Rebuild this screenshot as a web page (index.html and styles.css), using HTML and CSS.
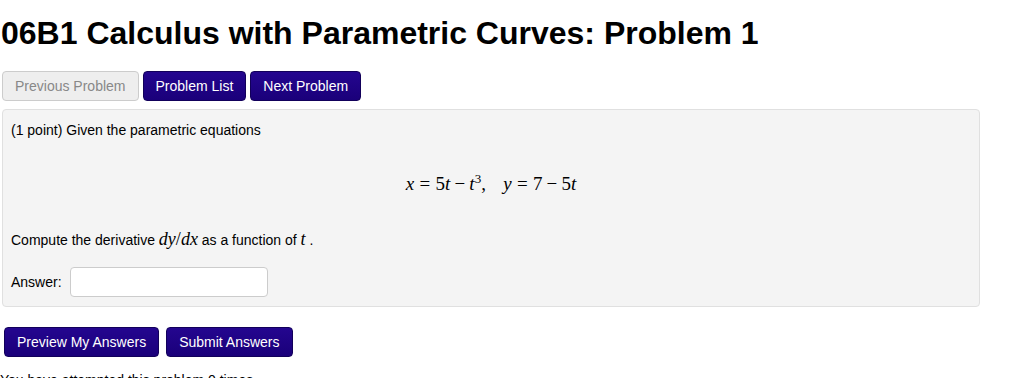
FILE: index.html
```html
<!DOCTYPE html>
<html lang="en">
<head>
    <meta charset="UTF-8">
    <title>06B1 Calculus with Parametric Curves: Problem 1</title>
    <link rel="stylesheet" href="styles.css">
</head>
<body>
    <h1 class="problem-title">06B1 Calculus with Parametric Curves: Problem 1</h1>

    <div class="nav-buttons">
        <span class="btn btn-disabled">Previous Problem</span>
        <a class="btn" href="#">Problem List</a>
        <a class="btn" href="#">Next Problem</a>
    </div>

    <div class="problem-box">
        <p class="problem-text">(1 point) Given the parametric equations</p>
        <div class="equation">
            <span class="math"><i>x</i><span class="rel">=</span>5<i>t</i><span class="bin">&minus;</span><i>t</i><sup>3</sup>,</span>
            <span class="math eq-gap"><i>y</i><span class="rel">=</span>7<span class="bin">&minus;</span>5<i>t</i></span>
        </div>
        <p class="problem-text">Compute the derivative <span class="math inline"><i>dy</i>/<i>dx</i></span> as a function of <span class="math inline"><i>t</i></span> .</p>
        <p class="answer-row">
            <label for="answer">Answer:</label>
            <input type="text" id="answer" class="answer-input">
        </p>
    </div>

    <div class="submit-buttons">
        <button class="btn">Preview My Answers</button>
        <button class="btn">Submit Answers</button>
    </div>

    <p class="attempts">You have attempted this problem 0 times.</p>
</body>
</html>
```

FILE: styles.css
```css
body {
    font-family: "Liberation Sans", Arial, sans-serif;
    font-size: 14px;
    color: #000;
    background-color: #fff;
    margin: 0;
    padding: 0 0 0 2px;
}

.problem-title {
    font-size: 32px;
    font-weight: bold;
    margin: 0;
    padding-top: 14px;
    line-height: 38px;
    margin-left: -1px;
}

.nav-buttons {
    display: flex;
    gap: 4px;
    margin-top: 19px;
}

.btn {
    display: inline-block;
    box-sizing: border-box;
    height: 30px;
    line-height: 28px;
    padding: 0 12px;
    font-family: "Liberation Sans", Arial, sans-serif;
    font-size: 14px;
    color: #fff;
    text-decoration: none;
    background: linear-gradient(#24068f, #1a007a);
    border: 1px solid #12005a;
    border-radius: 4px;
    cursor: pointer;
}

.btn-disabled {
    color: #888;
    background: #eee;
    border-color: #ccc;
    cursor: default;
}

.problem-box {
    margin-top: 8px;
    width: 978px;
    box-sizing: border-box;
    background-color: #f4f4f4;
    border: 1px solid #e0e0e0;
    border-radius: 4px;
    padding: 12px 8px 9px 8px;
}

.problem-text {
    margin: 0;
    line-height: 17px;
}

.equation {
    text-align: center;
    margin: 30px 0 37px 0;
    font-size: 19px;
    line-height: 20px;
}

.math {
    font-family: "Liberation Serif", "Times New Roman", serif;
}

.math sup {
    font-size: 13px;
}

.rel {
    margin: 0 0.28em;
}

.bin {
    margin: 0 0.22em;
}

.eq-gap {
    margin-left: 12px;
}

.inline {
    font-size: 18px;
}

.answer-row {
    display: flex;
    align-items: center;
    gap: 8px;
    margin: 18px 0 0 0;
}

.answer-input {
    width: 198px;
    height: 30px;
    box-sizing: border-box;
    border: 1px solid #ccc;
    border-radius: 4px;
    background-color: #fff;
    margin: 0;
}

.submit-buttons {
    display: flex;
    gap: 7px;
    margin-top: 20px;
    margin-left: 2px;
}

.attempts {
    margin: 15px 0 0 -2px;
}
```
